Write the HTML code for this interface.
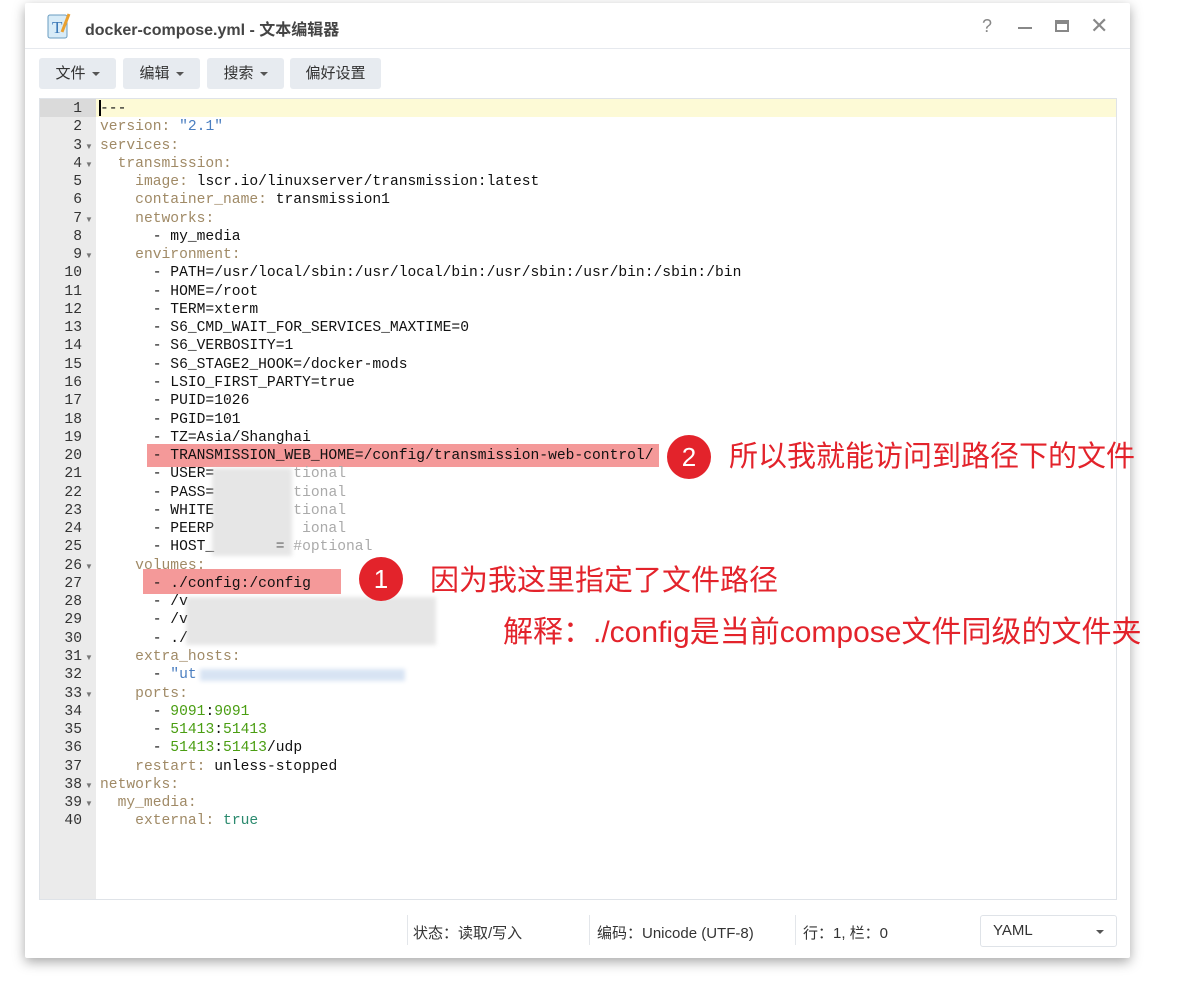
<!DOCTYPE html>
<html><head><meta charset="utf-8"><style>
*{margin:0;padding:0;box-sizing:border-box}
body{width:1192px;height:983px;background:#fff;position:relative;overflow:hidden;font-family:"Liberation Sans","Noto Sans CJK SC",sans-serif}
.win{position:absolute;left:25px;top:3px;width:1105px;height:955px;background:#fff;box-shadow:0 4px 12px rgba(0,0,0,.35);border-radius:2px}
.title{position:absolute;left:85px;top:16px;font-size:16px;font-weight:bold;color:#444}
.tline{position:absolute;left:25px;top:48px;width:1105px;height:1px;background:#e6e9ee}
.btn{position:absolute;top:58px;height:31px;background:#e7ebf0;border-radius:3px;font-size:15px;color:#333;line-height:31px;text-align:center}
.car{display:inline-block;width:0;height:0;border-left:4px solid transparent;border-right:4px solid transparent;border-top:4px solid #555;vertical-align:middle;margin-left:6px}
.ed{position:absolute;left:39px;top:98px;width:1078px;height:802px;border:1px solid #dfe3e8;background:#fff}
.gut{position:absolute;left:40px;top:99px;width:56px;height:800px;background:#ebebeb}
.hl1{position:absolute;left:40px;top:99px;width:1076px;height:18px;background:#fdfad6}
.hl1g{position:absolute;left:40px;top:99px;width:56px;height:18px;background:#dadada}
pre{position:absolute;top:100px;font-family:"Liberation Mono",monospace;font-size:14.65px;line-height:18.26px;color:#111}
.num{left:40px;width:42px;text-align:right;color:#333}
.code{left:100px}
.k{color:#a08a66}.s{color:#4a7ec0}.n{color:#4a9e12}.t{color:#2b8a6e}.c{color:#aaa}
.fold{position:absolute;left:85px;font-size:8px;color:#777}
.mark{position:absolute;background:rgba(240,110,110,.7)}
.blur{position:absolute;background:#c8c8c8;opacity:.45;filter:blur(2px)}
.circ{position:absolute;width:44px;height:44px;border-radius:50%;background:#e3232b;color:#fff;font-size:26px;text-align:center;line-height:44px}
.ann{position:absolute;color:#e3232b;font-size:29px;white-space:nowrap;font-family:"Liberation Sans","Noto Sans CJK SC",sans-serif}
.st{position:absolute;top:922px;font-size:15px;color:#333}
.sep{position:absolute;top:915px;width:1px;height:30px;background:#e3e6ea}
</style></head><body>
<div class="win"></div>
<svg style="position:absolute;left:46px;top:12px" width="26" height="28" viewBox="0 0 26 28"><rect x="2" y="3" width="19" height="23" rx="2" fill="#d8ecf8" stroke="#6a9cc0"/><text x="6" y="21" font-size="17" fill="#3a78b8" font-family="Liberation Serif">T</text><path d="M23 2 L16 20" stroke="#e9a030" stroke-width="3"/></svg>
<div class="title">docker-compose.yml - 文本编辑器</div>
<div style="position:absolute;left:982px;top:16px;font-size:18px;color:#888">?</div>
<div style="position:absolute;left:1018px;top:27px;width:14px;height:2px;background:#888"></div>
<div style="position:absolute;left:1055px;top:20px;width:14px;height:12px;border:2px solid #888;border-top-width:4px"></div>
<div style="position:absolute;left:1090px;top:13px;font-size:22px;color:#888">✕</div>
<div class="tline"></div>
<div class="btn" style="left:39px;width:77px">文件<span class="car"></span></div>
<div class="btn" style="left:123px;width:77px">编辑<span class="car"></span></div>
<div class="btn" style="left:207px;width:77px">搜索<span class="car"></span></div>
<div class="btn" style="left:290px;width:91px">偏好设置</div>
<div class="ed"></div>
<div class="gut"></div>
<div class="hl1"></div><div class="hl1g"></div>
<div style="position:absolute;left:99px;top:100px;width:2px;height:16px;background:#000"></div>
<div class="mark" style="left:147px;top:444px;width:512px;height:23px"></div>
<div class="mark" style="left:143px;top:569px;width:198px;height:25px"></div>
<pre class="num">1
2
3
4
5
6
7
8
9
10
11
12
13
14
15
16
17
18
19
20
21
22
23
24
25
26
27
28
29
30
31
32
33
34
35
36
37
38
39
40</pre>
<div class="fold" style="top:142px">▼</div><div class="fold" style="top:160px">▼</div><div class="fold" style="top:215px">▼</div><div class="fold" style="top:251px">▼</div><div class="fold" style="top:562px">▼</div><div class="fold" style="top:653px">▼</div><div class="fold" style="top:690px">▼</div><div class="fold" style="top:781px">▼</div><div class="fold" style="top:799px">▼</div>
<pre class="code">---
<span class="k">version:</span> <span class="s">"2.1"</span>
<span class="k">services:</span>
  <span class="k">transmission:</span>
    <span class="k">image:</span> lscr.io/linuxserver/transmission:latest
    <span class="k">container_name:</span> transmission1
    <span class="k">networks:</span>
      - my_media
    <span class="k">environment:</span>
      - PATH=/usr/local/sbin:/usr/local/bin:/usr/sbin:/usr/bin:/sbin:/bin
      - HOME=/root
      - TERM=xterm
      - S6_CMD_WAIT_FOR_SERVICES_MAXTIME=0
      - S6_VERBOSITY=1
      - S6_STAGE2_HOOK=/docker-mods
      - LSIO_FIRST_PARTY=true
      - PUID=1026
      - PGID=101
      - TZ=Asia/Shanghai
      - TRANSMISSION_WEB_HOME=/config/transmission-web-control/
      - USER=         <span class="c">tional</span>
      - PASS=         <span class="c">tional</span>
      - WHITE         <span class="c">tional</span>
      - PEERP          <span class="c">ional</span>
      - HOST_       = <span class="c">#optional</span>
    <span class="k">volumes:</span>
      - ./config:/config
      - /v
      - /v
      - ./
    <span class="k">extra_hosts:</span>
      - <span class="s">"ut</span>
    <span class="k">ports:</span>
      - <span class="n">9091</span>:<span class="n">9091</span>
      - <span class="n">51413</span>:<span class="n">51413</span>
      - <span class="n">51413</span>:<span class="n">51413</span>/udp
    <span class="k">restart:</span> unless-stopped
<span class="k">networks:</span>
  <span class="k">my_media:</span>
    <span class="k">external:</span> <span class="t">true</span></pre>
<div class="blur" style="left:212px;top:468px;width:80px;height:88px"></div>
<div class="blur" style="left:186px;top:597px;width:250px;height:48px"></div>
<div class="blur" style="left:200px;top:669px;width:205px;height:12px;background:#a9c3e6"></div>
<div class="circ" style="left:667px;top:435px">2</div>
<div class="ann" style="left:729px;top:433px">所以我就能访问到路径下的文件</div>
<div class="circ" style="left:359px;top:557px">1</div>
<div class="ann" style="left:430px;top:557px">因为我这里指定了文件路径</div>
<div class="ann" style="left:503px;top:607px;font-size:30px">解释：./config是当前compose文件同级的文件夹</div>
<div class="sep" style="left:407px"></div><div class="sep" style="left:589px"></div><div class="sep" style="left:795px"></div>
<div class="st" style="left:413px">状态：读取/写入</div>
<div class="st" style="left:597px">编码：Unicode (UTF-8)</div>
<div class="st" style="left:803px">行：1, 栏：0</div>
<div style="position:absolute;left:980px;top:915px;width:137px;height:32px;border:1px solid #dfe3e8;border-radius:3px;font-size:15px;color:#333;line-height:30px;padding-left:12px">YAML<span class="car" style="position:absolute;right:12px;top:14px;margin:0"></span></div>
</body></html>
